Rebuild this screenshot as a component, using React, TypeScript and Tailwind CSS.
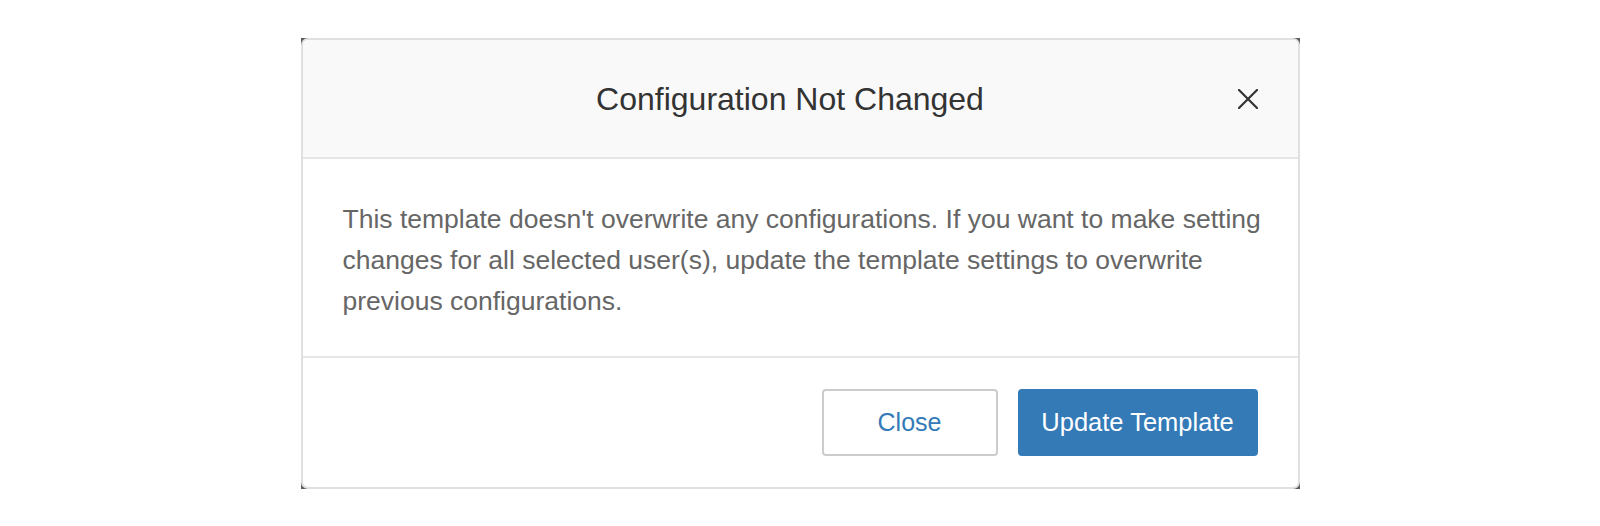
import React from "react";

export default function App() {
  return (
    <div
      className="w-full h-[526px] bg-white flex justify-center pt-[38px]"
      style={{ fontFamily: '"Liberation Sans", Arial, sans-serif' }}
    >
      <div className="w-[999px] h-[451px] bg-[#5c5c5c]">
        <div className="w-full h-full bg-white rounded-[7px] border-2 border-[#e0e0e0] flex flex-col overflow-hidden">
          <div className="h-[119px] bg-[#f9f9f9] border-b-2 border-[#e6e6e6] flex items-center pl-10 pr-10">
            <div className="flex-1 text-center text-[32px] font-light text-[#333333]">
              Configuration Not Changed
            </div>
            <button className="w-[20px] h-[20px] flex items-center justify-center">
              <svg width="20" height="20" viewBox="0 0 20 20" fill="none">
                <path d="M1 1 L19 19 M19 1 L1 19" stroke="#333" strokeWidth="2.2" strokeLinecap="round" />
              </svg>
            </button>
          </div>
          <div className="h-[199px] border-b-2 border-[#e6e6e6] pl-10 pr-[30px] pt-[40px]">
            <p className="text-[26.5px] leading-[41px] text-[#666666]">
              This template doesn't overwrite any configurations. If you want to make setting changes for all selected user(s), update the template settings to overwrite previous configurations.
            </p>
          </div>
          <div className="flex-1 flex items-center justify-end pr-10 gap-5">
            <button className="w-[176px] h-[67px] rounded-[4px] border-2 border-[#cccccc] bg-white text-[25px] text-[#337ab7]">
              Close
            </button>
            <button className="w-[240px] h-[67px] rounded-[4px] bg-[#337ab7] text-[25.5px] text-white">
              Update Template
            </button>
          </div>
        </div>
      </div>
    </div>
  );
}
